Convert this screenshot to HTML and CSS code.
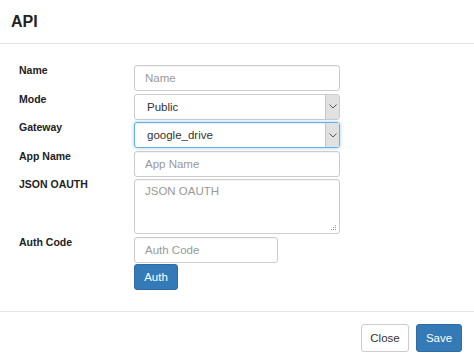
FILE: index.html
```html
<!DOCTYPE html>
<html>
<head>
<meta charset="utf-8">
<link rel="stylesheet" href="styles.css">
</head>
<body>
<div class="modal">
  <div class="modal-header"><h4 class="title">API</h4></div>
  <div class="modal-body">
    <div class="row">
      <label class="lbl">Name</label>
      <div class="ctl"><input class="input" type="text" placeholder="Name"></div>
    </div>
    <div class="row">
      <label class="lbl">Mode</label>
      <div class="ctl"><div class="select"><span class="val">Public</span><span class="arrow"><svg width="8" height="5" viewBox="0 0 8 5"><path d="M0.5 0.5 L4 4 L7.5 0.5" fill="none" stroke="#555" stroke-width="1"/></svg></span></div></div>
    </div>
    <div class="row">
      <label class="lbl">Gateway</label>
      <div class="ctl"><div class="select focus"><span class="val">google_drive</span><span class="arrow"><svg width="8" height="5" viewBox="0 0 8 5"><path d="M0.5 0.5 L4 4 L7.5 0.5" fill="none" stroke="#555" stroke-width="1"/></svg></span></div></div>
    </div>
    <div class="row">
      <label class="lbl">App Name</label>
      <div class="ctl"><input class="input" type="text" placeholder="App Name"></div>
    </div>
    <div class="row">
      <label class="lbl">JSON OAUTH</label>
      <div class="ctl">
        <div class="textarea-wrap">
          <textarea class="textarea" placeholder="JSON OAUTH"></textarea>
          <svg class="grip" width="6" height="6" viewBox="0 0 6 6"><rect x="4" y="0" width="1" height="1" fill="#999"/><rect x="2" y="2" width="1" height="1" fill="#999"/><rect x="4" y="2" width="1" height="1" fill="#999"/><rect x="0" y="4" width="1" height="1" fill="#999"/><rect x="2" y="4" width="1" height="1" fill="#999"/><rect x="4" y="4" width="1" height="1" fill="#999"/></svg>
        </div>
      </div>
    </div>
    <div class="row">
      <label class="lbl">Auth Code</label>
      <div class="ctl">
        <input class="input short" type="text" placeholder="Auth Code">
        <button class="btn primary auth">Auth</button>
      </div>
    </div>
  </div>
  <div class="modal-footer">
    <button class="btn default close">Close</button>
    <button class="btn primary save">Save</button>
  </div>
</div>
</body>
</html>
```
FILE: styles.css
```css
* { box-sizing: border-box; }
html, body { margin: 0; padding: 0; background: #fff; }
body {
  font-family: "Liberation Sans", Arial, sans-serif;
  color: #333;
  width: 474px;
  height: 363px;
  overflow: hidden;
}
.modal { display: flex; flex-direction: column; height: 363px; }
.modal-header {
  height: 44px;
  border-bottom: 1px solid #e5e5e5;
  padding: 12px 11px 0;
}
.title { margin: 0; font-size: 16px; font-weight: bold; color: #222; line-height: 20px; }
.modal-body {
  flex: 1;
  padding: 21px 0 0 19px;
}
.row {
  display: grid;
  grid-template-columns: 115px 206px;
  margin-bottom: 2.5px;
}
.lbl {
  font-size: 10.5px;
  font-weight: bold;
  color: #222;
  line-height: 13px;
  margin-top: -1px;
}
.ctl { display: flex; flex-direction: column; align-items: flex-start; }
.input, .textarea {
  width: 206px;
  height: 26px;
  border: 1px solid #ccc;
  border-radius: 3px;
  padding: 0 10px;
  font-family: "Liberation Sans", Arial, sans-serif;
  font-size: 11.5px;
  color: #555;
  background: #fff;
  box-shadow: inset 0 1px 1px rgba(0,0,0,0.05);
  outline: none;
}
.input::placeholder, .textarea::placeholder { color: #999; }
.input.short { width: 144px; }
.textarea-wrap { position: relative; width: 206px; height: 55px; }
.textarea {
  height: 55px;
  padding: 5px 10px;
  resize: none;
  display: block;
}
.grip { position: absolute; right: 3px; bottom: 3px; }
.select {
  width: 206px;
  height: 26px;
  border: 1px solid #ccc;
  border-radius: 3px;
  display: flex;
  align-items: stretch;
  background: #fff;
}
.select .val {
  flex: 1;
  font-size: 11.5px;
  color: #333;
  padding-left: 12px;
  line-height: 24px;
}
.select .arrow {
  width: 14px;
  background: #e1e1e1;
  border-left: 1px solid #c7c7c7;
  display: flex;
  align-items: center;
  justify-content: center;
}
.select.focus {
  border-color: #66afe9;
  box-shadow: inset 0 1px 1px rgba(0,0,0,.075), 0 0 4px rgba(102,175,233,.6);
}
.btn {
  font-family: "Liberation Sans", Arial, sans-serif;
  font-size: 11.5px;
  height: 28px;
  border-radius: 3px;
  border: 1px solid transparent;
  padding: 0;
  cursor: pointer;
}
.btn.primary { background: #337ab7; border-color: #2e6da4; color: #fff; }
.btn.default { background: #fff; border-color: #ccc; color: #333; }
.btn.auth { margin-top: 1px; height: 26px; width: 44px; }
.btn.close { width: 48px; }
.btn.save { width: 46px; }
.modal-footer {
  height: 52px;
  border-top: 1px solid #e5e5e5;
  display: flex;
  justify-content: flex-end;
  align-items: flex-start;
  gap: 7px;
  padding: 12px 12px 0 0;
}
```
